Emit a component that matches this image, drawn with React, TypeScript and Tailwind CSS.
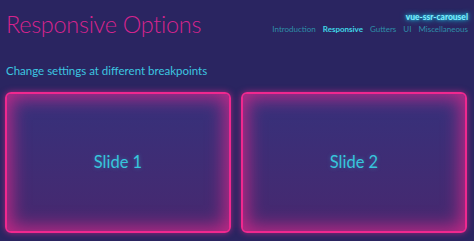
const links = ["Introduction", "Responsive", "Gutters", "UI", "Miscellaneous"];

function Slide({ label }: { label: string }) {
  return (
    <div className="flex h-[141px] flex-1 items-center justify-center rounded-[6px] border-2 border-[#f0288f] bg-gradient-to-b from-[#35317b] to-[#47286f] shadow-[inset_0_0_18px_4px_rgba(232,40,140,0.75),0_0_6px_rgba(240,40,143,0.6)]">
      <span className="text-[16.5px] font-normal text-[#37c6dc] [text-shadow:0_0_4px_rgba(55,198,220,0.4)]">
        {label}
      </span>
    </div>
  );
}

export default function App() {
  return (
    <div className="h-[241px] w-[474px] overflow-hidden bg-[#2a2561] font-['Lato','Noto_Sans',sans-serif]">
      <div className="flex h-[40px] items-start justify-between px-[6px] pt-[9px]">
        <h1 className="text-[23.5px] font-light leading-[30px] tracking-[-0.3px] text-[#d4248d]">
          Responsive Options
        </h1>
        <div className="flex flex-col items-end pt-[2px]">
          <span className="text-[8.5px] font-bold leading-[12px] text-[#7ff0ff] [text-shadow:0_0_3px_#21d3ee,0_0_6px_#21d3ee]">
            vue-ssr-carousel
          </span>
          <nav className="flex gap-[7px] text-[8px] leading-[12px]">
            {links.map((l) => (
              <span
                key={l}
                className={
                  l === "Responsive"
                    ? "font-bold text-[#3fd6e6]"
                    : "text-[#2e8fa8]"
                }
              >
                {l}
              </span>
            ))}
          </nav>
        </div>
      </div>
      <p className="mt-[23px] px-[6px] text-[11.5px] leading-[16px] text-[#3cc6e0]">
        Change settings at different breakpoints
      </p>
      <div className="mt-[13px] flex gap-[10px] pl-[5px] pr-[7px]">
        <Slide label="Slide 1" />
        <Slide label="Slide 2" />
      </div>
    </div>
  );
}
